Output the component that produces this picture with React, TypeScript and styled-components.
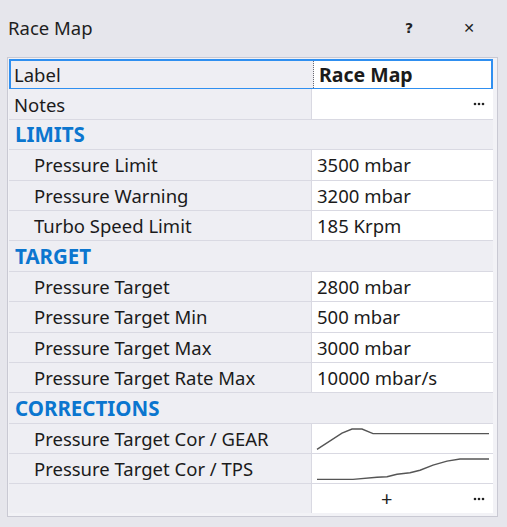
import React from 'react'
import styled, { createGlobalStyle } from 'styled-components'

const GlobalStyle = createGlobalStyle`
  html, body {
    margin: 0;
    padding: 0;
    background: #e6e6ec;
  }
  body {
    font-family: "Noto Sans", "Open Sans", sans-serif;
    color: #1b1b1b;
  }
`

const Window = styled.div`
  width: 507px;
  height: 527px;
  box-sizing: border-box;
  background: #e6e6ec;
  display: flex;
  flex-direction: column;
`

const TitleBar = styled.div`
  height: 57px;
  display: flex;
  align-items: center;
  padding: 0 8px 2px 8px;
  box-sizing: border-box;
`

const Title = styled.div`
  flex: 1;
  font-size: 18.5px;
  color: #1e1e1e;
`

const TitleButton = styled.div`
  width: 60px;
  text-align: center;
  font-size: 14px;
  font-weight: 700;
  color: #222;
  font-family: "DejaVu Sans", sans-serif;
`

const Grid = styled.div`
  margin-left: 7px;
  width: 491px;
  height: 460px;
  box-sizing: border-box;
  border: 1px solid #c9c9d3;
  background: #f2f2f6;
  padding: 1px 4px 3px 1px;
  display: flex;
  flex-direction: column;
`

const Row = styled.div<{ $selected?: boolean; $last?: boolean }>`
  display: grid;
  grid-template-columns: 303px 1fr;
  height: 30.4px;
  flex: ${(p) => (p.$last ? '1' : 'none')};
  box-sizing: border-box;
  border-bottom: ${(p) => (p.$last ? 'none' : '1px solid #d9d9e2')};
  font-size: 18.5px;
  ${(p) => p.$selected && 'border: 2px solid #2f8ff0;'}
`

const LabelCell = styled.div<{ $indent?: boolean; $selected?: boolean }>`
  background: #eeeef3;
  border-right: 1px ${(p) => (p.$selected ? 'dotted #6a6a72' : 'solid #d9d9e2')};
  display: flex;
  align-items: center;
  padding-left: ${(p) => (p.$indent ? '25px' : p.$selected ? '3px' : '5px')};
  white-space: nowrap;
`

const ValueCell = styled.div<{ $bold?: boolean }>`
  background: #fff;
  display: flex;
  align-items: center;
  padding-left: 5px;
  padding-right: 8px;
  font-weight: ${(p) => (p.$bold ? 700 : 400)};
  font-size: ${(p) => (p.$bold ? '19.5px' : 'inherit')};
  white-space: nowrap;
  position: relative;
`

const Dots = styled.svg`
  margin-left: auto;
  width: 12px;
  height: 4px;
  display: block;
`

const Plus = styled.span`
  position: absolute;
  left: 69px;
  top: 50%;
  transform: translateY(-50%);
  font-size: 20px;
  line-height: 1;
  color: #222;
`

const SectionRow = styled.div`
  height: 30.4px;
  flex: none;
  box-sizing: border-box;
  border-bottom: 1px solid #d9d9e2;
  background: #eeeef3;
  display: flex;
  align-items: center;
  padding-left: 6px;
  color: #0b76cf;
  font-weight: 700;
  font-size: 20.5px;
`

const Spark = styled.svg`
  width: 100%;
  height: 100%;
  display: block;
`

const SparkCell = styled(ValueCell)`
  padding: 0;
`

type Item = { label: string; value: string }

const sections: { title: string; items: Item[] }[] = [
  {
    title: 'LIMITS',
    items: [
      { label: 'Pressure Limit', value: '3500 mbar' },
      { label: 'Pressure Warning', value: '3200 mbar' },
      { label: 'Turbo Speed Limit', value: '185 Krpm' },
    ],
  },
  {
    title: 'TARGET',
    items: [
      { label: 'Pressure Target', value: '2800 mbar' },
      { label: 'Pressure Target Min', value: '500 mbar' },
      { label: 'Pressure Target Max', value: '3000 mbar' },
      { label: 'Pressure Target Rate Max', value: '10000 mbar/s' },
    ],
  },
]

// points relative to the value cell
const gearLine = '5,25 30,9 40,5 50,5 61,9.5 177,9.5'
const tpsLine =
  '5,25 41,25 65,23 75,22.5 85,20 98,18.5 108,16 121,11 135,7 148,5 177,5'

const MoreDots = () => (
  <Dots viewBox="0 0 12 4">
    <circle cx="2" cy="2" r="1.3" fill="#222" />
    <circle cx="6" cy="2" r="1.3" fill="#222" />
    <circle cx="10" cy="2" r="1.3" fill="#222" />
  </Dots>
)

export default function App() {
  return (
    <>
      <GlobalStyle />
      <Window>
        <TitleBar>
          <Title>Race Map</Title>
          <TitleButton>?</TitleButton>
          <TitleButton>✕</TitleButton>
        </TitleBar>
        <Grid>
          <Row $selected>
            <LabelCell $selected>Label</LabelCell>
            <ValueCell $bold>Race Map</ValueCell>
          </Row>
          <Row>
            <LabelCell>Notes</LabelCell>
            <ValueCell>
              <MoreDots />
            </ValueCell>
          </Row>
          {sections.map((s) => (
            <React.Fragment key={s.title}>
              <SectionRow>{s.title}</SectionRow>
              {s.items.map((it) => (
                <Row key={it.label}>
                  <LabelCell $indent>{it.label}</LabelCell>
                  <ValueCell>{it.value}</ValueCell>
                </Row>
              ))}
            </React.Fragment>
          ))}
          <SectionRow>CORRECTIONS</SectionRow>
          <Row>
            <LabelCell $indent>Pressure Target Cor / GEAR</LabelCell>
            <SparkCell>
              <Spark viewBox="0 0 181 29" preserveAspectRatio="none">
                <polyline points={gearLine} fill="none" stroke="#555" strokeWidth="1.4" />
              </Spark>
            </SparkCell>
          </Row>
          <Row>
            <LabelCell $indent>Pressure Target Cor / TPS</LabelCell>
            <SparkCell>
              <Spark viewBox="0 0 181 29" preserveAspectRatio="none">
                <polyline points={tpsLine} fill="none" stroke="#555" strokeWidth="1.4" />
              </Spark>
            </SparkCell>
          </Row>
          <Row $last>
            <LabelCell />
            <ValueCell>
              <Plus>+</Plus>
              <MoreDots />
            </ValueCell>
          </Row>
        </Grid>
      </Window>
    </>
  )
}
